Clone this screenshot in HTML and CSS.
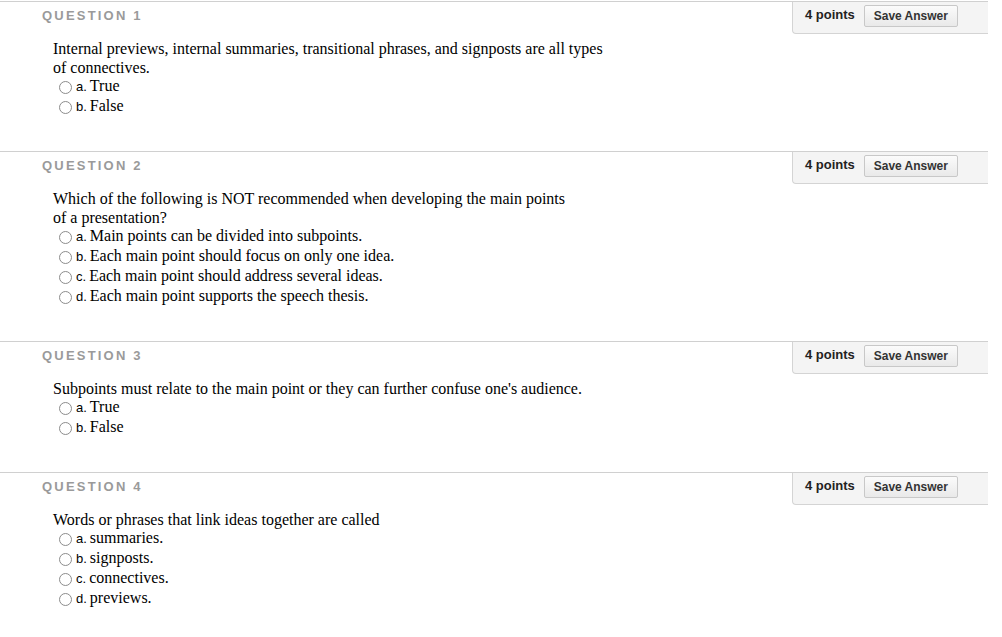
FILE: index.html
```html
<!DOCTYPE html>
<html>
<head>
<meta charset="utf-8">
<link rel="stylesheet" href="styles.css">
</head>
<body>
<div class="page">
  <section class="question">
    <div class="qhead">
      <h3 class="qtitle">QUESTION 1</h3>
      <div class="points"><span class="pts">4 points</span><button class="save">Save Answer</button></div>
    </div>
    <div class="qbody">
      <div class="qtext">Internal previews, internal summaries, transitional phrases, and signposts are all types<br>of connectives.</div>
      <ul class="opts">
        <li><span class="radio"></span><span class="letter">a.</span><span class="otext">True</span></li>
        <li><span class="radio"></span><span class="letter">b.</span><span class="otext">False</span></li>
      </ul>
    </div>
  </section>
  <section class="question">
    <div class="qhead">
      <h3 class="qtitle">QUESTION 2</h3>
      <div class="points"><span class="pts">4 points</span><button class="save">Save Answer</button></div>
    </div>
    <div class="qbody">
      <div class="qtext">Which of the following is NOT recommended when developing the main points<br>of a presentation?</div>
      <ul class="opts">
        <li><span class="radio"></span><span class="letter">a.</span><span class="otext">Main points can be divided into subpoints.</span></li>
        <li><span class="radio"></span><span class="letter">b.</span><span class="otext">Each main point should focus on only one idea.</span></li>
        <li><span class="radio"></span><span class="letter">c.</span><span class="otext">Each main point should address several ideas.</span></li>
        <li><span class="radio"></span><span class="letter">d.</span><span class="otext">Each main point supports the speech thesis.</span></li>
      </ul>
    </div>
  </section>
  <section class="question">
    <div class="qhead">
      <h3 class="qtitle">QUESTION 3</h3>
      <div class="points"><span class="pts">4 points</span><button class="save">Save Answer</button></div>
    </div>
    <div class="qbody">
      <div class="qtext">Subpoints must relate to the main point or they can further confuse one's audience.</div>
      <ul class="opts">
        <li><span class="radio"></span><span class="letter">a.</span><span class="otext">True</span></li>
        <li><span class="radio"></span><span class="letter">b.</span><span class="otext">False</span></li>
      </ul>
    </div>
  </section>
  <section class="question">
    <div class="qhead">
      <h3 class="qtitle">QUESTION 4</h3>
      <div class="points"><span class="pts">4 points</span><button class="save">Save Answer</button></div>
    </div>
    <div class="qbody">
      <div class="qtext">Words or phrases that link ideas together are called</div>
      <ul class="opts">
        <li><span class="radio"></span><span class="letter">a.</span><span class="otext">summaries.</span></li>
        <li><span class="radio"></span><span class="letter">b.</span><span class="otext">signposts.</span></li>
        <li><span class="radio"></span><span class="letter">c.</span><span class="otext">connectives.</span></li>
        <li><span class="radio"></span><span class="letter">d.</span><span class="otext">previews.</span></li>
      </ul>
    </div>
  </section>
</div>
</body>
</html>
```
FILE: styles.css
```css
html, body {
  margin: 0;
  padding: 0;
  background: #ffffff;
}
.page {
  width: 988px;
  padding-top: 1px;
}
.question {
  border-top: 1px solid #d0d0d0;
  padding-bottom: 35px;
}
.qhead {
  display: flex;
  align-items: flex-start;
  height: 32px;
}
.qtitle {
  margin: 0;
  padding: 6px 0 0 42px;
  font-family: "Liberation Sans", Arial, sans-serif;
  font-weight: bold;
  font-size: 13px;
  letter-spacing: 2.2px;
  line-height: 15px;
  color: #9a9a9a;
}
.points {
  margin-left: auto;
  width: 195px;
  height: 31px;
  box-sizing: content-box;
  background: #f4f4f4;
  border-left: 1px solid #d4d4d4;
  border-bottom: 1px solid #d4d4d4;
  border-bottom-left-radius: 4px;
  display: flex;
  align-items: center;
}
.pts {
  font-family: "Liberation Sans", Arial, sans-serif;
  font-weight: bold;
  font-size: 13px;
  color: #222;
  margin-left: 12px;
  margin-top: -6px;
}
.save {
  margin-left: 9px;
  margin-top: -3px;
  height: 22px;
  width: 94px;
  padding: 0;
  font-family: "Liberation Sans", Arial, sans-serif;
  font-weight: bold;
  font-size: 12px;
  color: #333;
  background: linear-gradient(#fbfbfb, #e9e9e9);
  border: 1px solid #c8c8c8;
  border-radius: 2px;
}
.qbody {
  padding: 5px 0 0 53px;
}
.qtext {
  font-family: "Liberation Serif", "Times New Roman", serif;
  font-size: 16px;
  line-height: 19px;
  color: #000;
}
.opts {
  list-style: none;
  margin: -1px 0 0 0;
  padding: 0 0 0 6px;
}
.opts li {
  display: flex;
  align-items: center;
  height: 20px;
  font-family: "Liberation Serif", "Times New Roman", serif;
  font-size: 16px;
  color: #000;
}
.radio {
  width: 11px;
  height: 11px;
  border: 1px solid #8c8c8c;
  border-radius: 50%;
  background: #fff;
  margin-top: 2px;
}
.letter {
  font-family: "Liberation Sans", Arial, sans-serif;
  font-size: 13px;
  margin-left: 4px;
  margin-right: 3px;
}
```
